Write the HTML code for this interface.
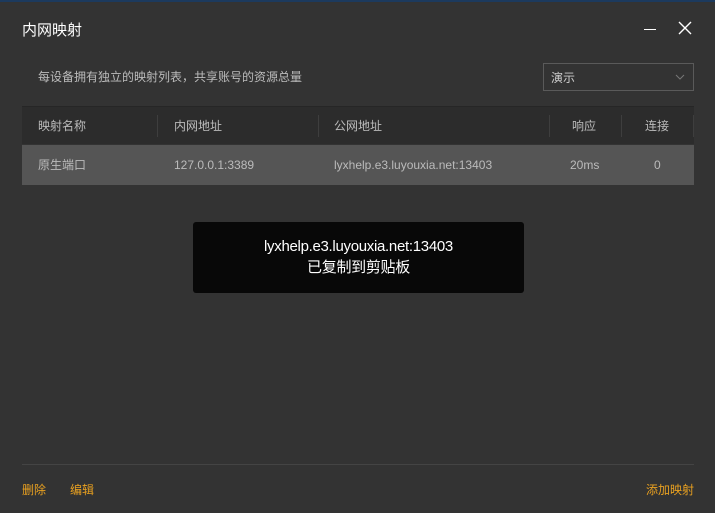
<!DOCTYPE html>
<html><head><meta charset="utf-8"><style>
*{margin:0;padding:0;box-sizing:border-box}
body{width:715px;height:513px;background:#333;font-family:"Liberation Sans","Noto Sans CJK SC",sans-serif;position:relative;overflow:hidden;color:#ddd}
.top{position:absolute;left:0;top:0;width:715px;height:2px;background:#1c3a5e}
.t{position:absolute;left:22px;top:19px;font-size:15px;color:#fff}
.min{position:absolute;left:644px;top:29px;width:12px;height:1px;background:#fff}
.x{position:absolute;left:678px;top:21px}
.desc{position:absolute;left:38px;top:68px;font-size:12px;color:#bbb}
.sel{position:absolute;left:543px;top:63px;width:151px;height:28px;border:1px solid #5a5a5a;font-size:12px;color:#ccc;padding:5px 0 0 7px}
.sel svg{position:absolute;right:8px;top:10px}
.hd{position:absolute;left:22px;top:106px;width:672px;height:38px;background:#2c2c2c;border-top:1px solid #262626}
.row{position:absolute;left:22px;top:145px;width:672px;height:40px;background:#555}
.c{position:absolute;font-size:12px;top:11px;line-height:16px;height:16px}
.hd .c{color:#bbb}
.row .c{color:#bbb;top:12px}
.sep{position:absolute;top:8px;width:1px;height:22px;background:#3e3e3e}
.toast{position:absolute;left:193px;top:222px;width:331px;height:71px;background:#080808;border-radius:3px;color:#fff;font-size:15px;text-align:center;padding-top:14px;line-height:21px;letter-spacing:-0.3px}
.fl{position:absolute;left:22px;top:464px;width:672px;height:1px;background:#444}
.o{position:absolute;top:481px;font-size:12px;color:#e8a020}
</style></head><body>
<div class="top"></div>
<div class="t">内网映射</div>
<div class="min"></div>
<svg class="x" width="14" height="14" viewBox="0 0 14 14"><path d="M1 1L13 13M13 1L1 13" stroke="#fff" stroke-width="1.4"/></svg>
<div class="desc">每设备拥有独立的映射列表，共享账号的资源总量</div>
<div class="sel">演示<svg width="10" height="6" viewBox="0 0 10 6"><path d="M1 1L5 5L9 1" stroke="#777" fill="none"/></svg></div>
<div class="hd">
<div class="c" style="left:16px">映射名称</div><div class="sep" style="left:135px"></div>
<div class="c" style="left:152px">内网地址</div><div class="sep" style="left:296px"></div>
<div class="c" style="left:312px">公网地址</div><div class="sep" style="left:527px"></div>
<div class="c" style="left:550px">响应</div><div class="sep" style="left:599px"></div>
<div class="c" style="left:623px">连接</div><div class="sep" style="left:671px"></div>
</div>
<div class="row">
<div class="c" style="left:16px">原生端口</div>
<div class="c" style="left:152px">127.0.0.1:3389</div>
<div class="c" style="left:312px">lyxhelp.e3.luyouxia.net:13403</div>
<div class="c" style="left:548px">20ms</div>
<div class="c" style="left:632px">0</div>
</div>
<div class="toast">lyxhelp.e3.luyouxia.net:13403<br>已复制到剪贴板</div>
<div class="fl"></div>
<div class="o" style="left:22px">删除</div>
<div class="o" style="left:70px">编辑</div>
<div class="o" style="left:646px">添加映射</div>
</body></html>
